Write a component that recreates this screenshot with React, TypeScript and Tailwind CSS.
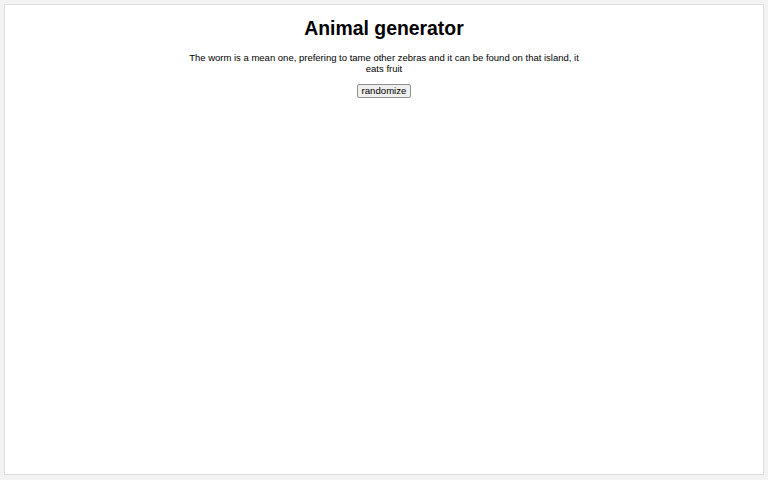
export default function App() {
  return (
    <div className="h-[480px] w-[768px] bg-[#f3f3f3] p-[4px] font-['Liberation_Sans',Arial,sans-serif] text-black">
      <div className="flex h-[471px] flex-col items-center border border-[#dddddd] bg-white">
        <h1 className="mt-[9px] text-[19.4px] font-bold leading-[28px]">Animal generator</h1>
        <p className="mt-[10px] w-[398px] text-center text-[9.5px] leading-[11px]">
          The worm is a mean one, prefering to tame other zebras and it can be found on that island, it eats fruit
        </p>
        <button className="mt-[10px] rounded-[2px] border border-[#8f8f8f] bg-[#efefef] px-[4px] text-[9.6px] leading-[12px]">
          randomize
        </button>
      </div>
    </div>
  );
}
